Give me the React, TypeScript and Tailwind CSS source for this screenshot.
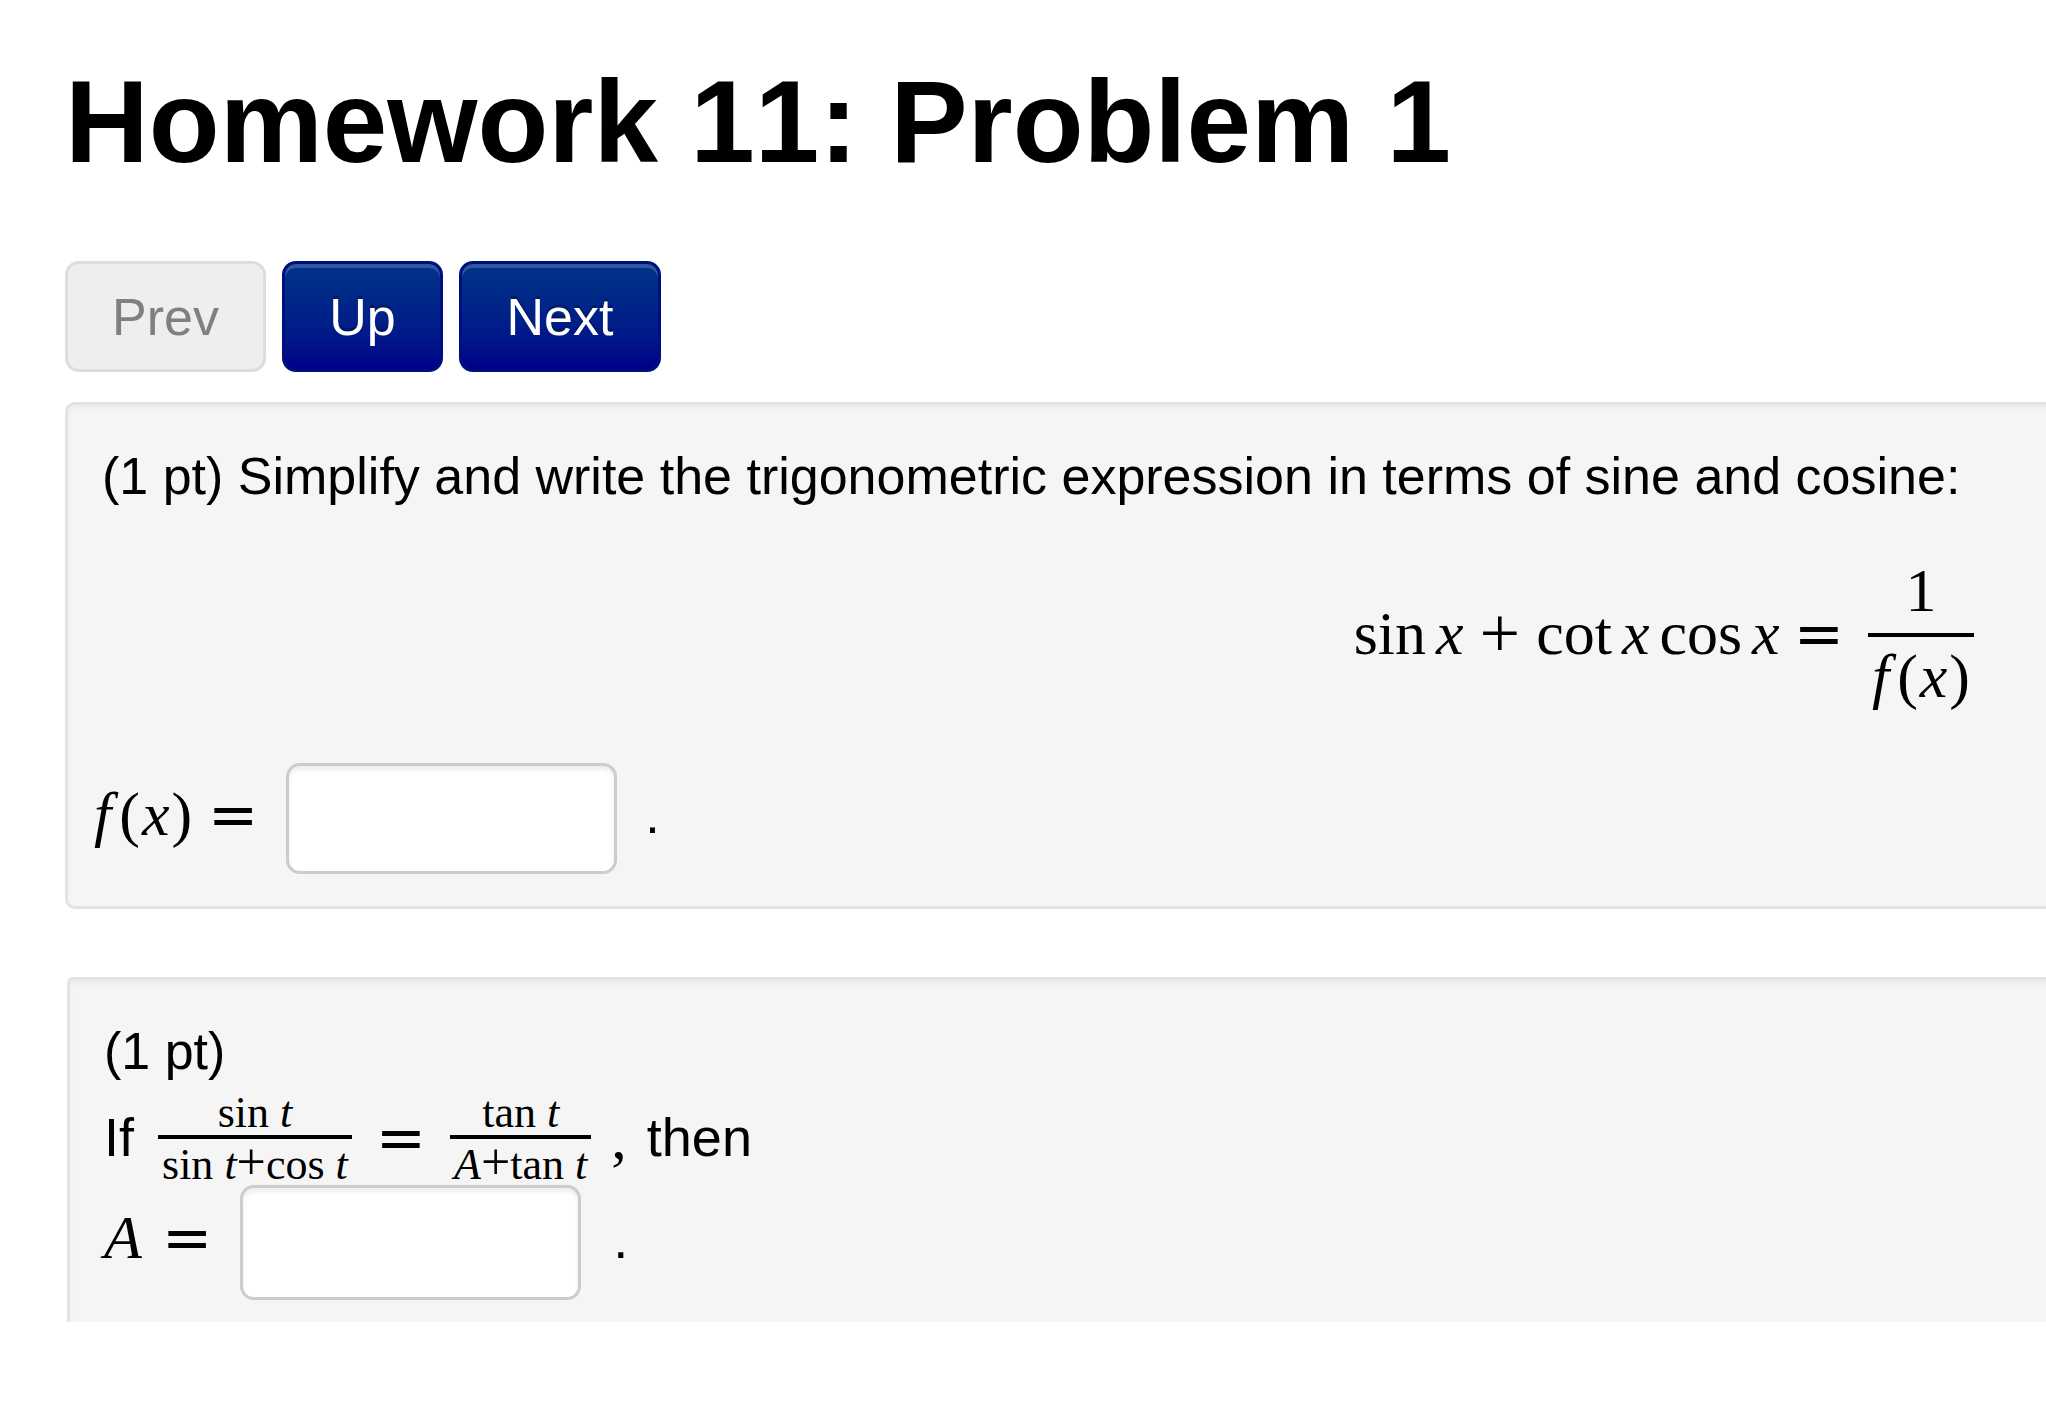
import clsx from "clsx"
import type { ReactNode } from "react"

const math = "font-['Liberation_Serif',serif] text-[62px] leading-none"
const navButton = "h-[111px] rounded-[14px] border-[3px] text-[52px] leading-none"
const primary =
  "border-[#000f80] bg-linear-to-b from-[#003388] to-[#000088] text-white shadow-[inset_0_4px_0_rgba(255,255,255,0.18)] [text-shadow:0_-3px_0_rgba(0,0,0,0.25)]"
const answer =
  "rounded-[14px] border-[3px] border-[#cccccc] bg-white px-4 text-[52px] shadow-[inset_0_4px_4px_rgba(0,0,0,0.07)]"

function Equals({ className }: { className?: string }) {
  return (
    <span className={clsx("font-['DejaVu_Sans',sans-serif] text-[60px] leading-none", className)}>=</span>
  )
}

function SmallPlus() {
  return <span className="text-[52px] leading-[0]">+</span>
}

function FofX() {
  return (
    <span>
      <i className="mr-2">f</i>(<i className="mx-0.5">x</i>)
    </span>
  )
}

function Fraction({
  top,
  bottom,
  small,
  className,
}: {
  top: ReactNode
  bottom: ReactNode
  small?: boolean
  className?: string
}) {
  return (
    <span className={clsx("flex flex-col text-center leading-none", small && "text-[44px]", className)}>
      <span className={clsx("border-b-4 border-black", small ? "h-[50px] pt-0.5" : "h-[78px]")}>{top}</span>
      <span className={clsx("whitespace-nowrap", small ? "h-[46px] px-1 pt-1" : "px-1 pt-2")}>{bottom}</span>
    </span>
  )
}

function Panel({ children, className }: { children: ReactNode; className?: string }) {
  return (
    <section
      className={clsx(
        "-mr-2 border-t-[3px] border-l-[3px] border-[#e3e3e3] bg-[#f5f5f5] pt-[41px] pl-[34px] shadow-[inset_0_4px_4px_rgba(0,0,0,0.04)]",
        className
      )}
    >
      {children}
    </section>
  )
}

export default function App() {
  return (
    <main className="overflow-hidden bg-white pt-16 pl-[65px] font-['Liberation_Sans',Arial,sans-serif] text-black">
      <h1 className="text-[116px] leading-none font-bold whitespace-nowrap [font-kerning:none]">
        Homework 11: Problem 1
      </h1>

      <nav className="mt-[81px] flex gap-4">
        <button
          type="button"
          disabled
          className={clsx(navButton, "w-[201px] border-[#dddddd] bg-[#eeeeee] text-[#808080]")}
        >
          Prev
        </button>
        <button type="button" className={clsx(navButton, primary, "w-[161px]")}>
          Up
        </button>
        <button type="button" className={clsx(navButton, primary, "w-[202px]")}>
          Next
        </button>
      </nav>

      <Panel className="mt-[30px] rounded-l-[10px] border-b-[3px] pb-8">
        <p className="text-[52px] leading-[60px] whitespace-nowrap">
          (1 pt) Simplify and write the trigonometric expression in terms of sine and cosine:
        </p>

        <div className={clsx(math, "mt-[53px] flex items-center justify-end pr-20 whitespace-nowrap")}>
          <span>sin</span>
          <i className="ml-2.5">x</i>
          <span className="ml-4 text-[72px] leading-none">+</span>
          <span className="ml-4">cot</span>
          <i className="ml-2.5">x</i>
          <span className="ml-2.5">cos</span>
          <i className="ml-2.5">x</i>
          <Equals className="ml-3.5" />
          <Fraction className="ml-6" top="1" bottom={<FofX />} />
        </div>

        <div className="mt-14 flex items-center">
          <label htmlFor="answer-f" className={clsx(math, "-ml-2 flex items-center pb-2.5")}>
            <FofX />
            <Equals className="ml-4" />
          </label>
          <input id="answer-f" type="text" className={clsx(answer, "ml-7 h-[111px] w-[331px]")} />
          <span className="ml-7 pb-2 text-[52px] leading-none">.</span>
        </div>
      </Panel>

      <Panel className="mt-[68px] ml-0.5 rounded-tl-md pb-[22px]">
        <p className="text-[52px] leading-[60px]">(1 pt)</p>

        <div className="mt-2 flex items-center text-[54px] leading-none whitespace-nowrap">
          <span>If</span>
          <span className={clsx(math, "ml-6 flex items-center")}>
            <Fraction
              small
              top={
                <>
                  sin <i>t</i>
                </>
              }
              bottom={
                <>
                  sin <i>t</i>
                  <SmallPlus />
                  cos <i>t</i>
                </>
              }
            />
            <Equals className="ml-6" />
            <Fraction
              small
              className="ml-6"
              top={
                <>
                  tan <i>t</i>
                </>
              }
              bottom={
                <>
                  <i>A</i>
                  <SmallPlus />
                  tan <i>t</i>
                </>
              }
            />
            <span className="ml-5">,</span>
          </span>
          <span className="ml-5">then</span>
        </div>

        <div className="flex items-center">
          <label htmlFor="answer-a" className={clsx(math, "flex items-center pb-3")}>
            <i>A</i>
            <Equals className="ml-5" />
          </label>
          <input id="answer-a" type="text" className={clsx(answer, "ml-7 h-[115px] w-[341px]")} />
          <span className="ml-8 pb-2 text-[54px] leading-none">.</span>
        </div>
      </Panel>
    </main>
  )
}
